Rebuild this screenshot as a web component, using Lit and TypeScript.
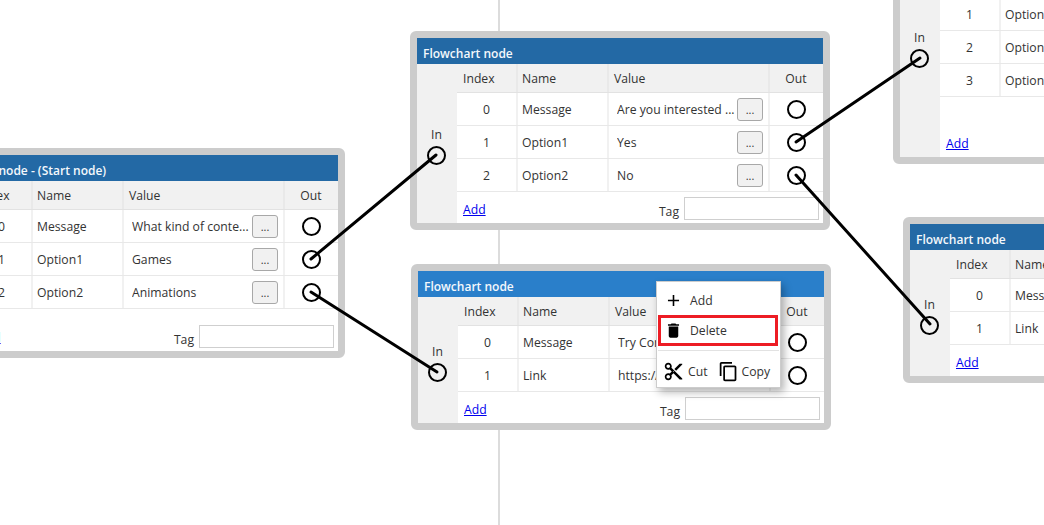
import { LitElement, html, css, svg } from "lit";
import { customElement, property } from "lit/decorators.js";

interface NodeData {
  title: string;
  x: number;
  y: number;
  rows: [string, string][];
  footer: number;
  selected?: boolean;
}

const NODES: NodeData[] = [
  { title: "Flowchart node - (Start node)", x: -75, y: 148, footer: 42, rows: [["Message", "What kind of conte..."], ["Option1", "Games"], ["Option2", "Animations"]] },
  { title: "Flowchart node", x: 410, y: 31, footer: 31, rows: [["Message", "Are you interested ..."], ["Option1", "Yes"], ["Option2", "No"]] },
  { title: "Flowchart node", x: 411, y: 264, footer: 31, selected: true, rows: [["Message", "Try Cor"], ["Link", "https://"]] },
  { title: "Flowchart node", x: 893, y: -97, footer: 60, rows: [["Message", "Which genre?"], ["Option1", "Action"], ["Option2", "Puzzle"], ["Option3", "Strategy"]] },
  { title: "Flowchart node", x: 903, y: 217, footer: 31, rows: [["Message", "Watch this"], ["Link", "https://example"]] },
];

const LINKS: [number, number, number, number][] = [
  [311, 259, 436, 155],
  [311, 292, 437, 372],
  [796, 142, 920, 58],
  [796, 175, 930, 324],
];

const FONT = css`"Open Sans", "Noto Sans", "Liberation Sans", sans-serif`;

@customElement("flow-node")
class FlowNode extends LitElement {
  @property({ attribute: false }) data!: NodeData;

  static styles = css`
    :host { display: block; font-family: ${FONT}; }
    .card {
      width: 420px;
      box-sizing: border-box;
      border: 7px solid #cccccc;
      border-radius: 6px;
      background: #fff;
      color: #333;
      font-size: 12.2px;
      overflow: hidden;
    }
    .head {
      height: 26px;
      line-height: 32px;
      padding-left: 6px;
      background: #2369a5;
      color: #f4f8fc;
      font-size: 12px;
      font-weight: 600;
      white-space: nowrap;
    }
    .selected .head { background: #2a7fca; }
    .body { display: flex; }
    .in {
      width: 40px;
      flex: none;
      background: #f1f1f1;
      display: flex;
      flex-direction: column;
      align-items: center;
      justify-content: center;
      gap: 3px;
      padding: 4px 1px 0 0;
      box-sizing: border-box;
    }
    .in span { line-height: 17px; }
    .dot {
      display: block;
      width: 19px;
      height: 19px;
      box-sizing: border-box;
      border: 2.5px solid #000;
      border-radius: 50%;
      background: #fff;
    }
    .in .dot { background: transparent; }
    .main { flex: 1; min-width: 0; }
    .row {
      display: grid;
      grid-template-columns: 59px 91px 161px 55px;
      height: 33px;
      box-sizing: border-box;
      border-bottom: 1px solid #e8e8e8;
      align-items: stretch;
    }
    .row.hdr { height: 29px; background: #f1f1f1; border-bottom: 1px solid #e2e2e2; }
    .cell {
      display: flex;
      align-items: center;
      min-width: 0;
      border-left: 2px solid #f1f1f1;
      padding-left: 4px;
    }
    .hdr .cell { border-left-color: #e9e9e9; }
    .cell:first-child { border-left: 0; padding-left: 6px; }
    .row:not(.hdr) .cell:first-child { justify-content: center; padding: 0; }
    .cell.val { padding-left: 8px; gap: 2px; padding-right: 5px; }
    .hdr .cell.val { padding-left: 5px; }
    .cell.out { justify-content: center; padding: 0 1px 0 0; }
    .txt { flex: 1; min-width: 0; overflow: hidden; white-space: nowrap; }
    .btn {
      flex: none;
      width: 26px;
      height: 23px;
      box-sizing: border-box;
      border: 1px solid #a8a8a8;
      border-radius: 3px;
      background: #f1f1f1;
      text-align: center;
      line-height: 22px;
      font-size: 11px;
      color: #333;
    }
    .foot {
      display: flex;
      justify-content: space-between;
      align-items: flex-end;
      padding: 0 4px 3px 6px;
      box-sizing: border-box;
    }
    .add { color: #0000ee; text-decoration: underline; line-height: 20px; }
    .tag { display: flex; align-items: flex-end; gap: 5px; }
    .tag span { line-height: 16px; }
    .input {
      width: 135px;
      height: 23px;
      box-sizing: border-box;
      border: 1px solid #cfcfcf;
      background: #fff;
    }
  `;

  render() {
    const d = this.data;
    return html`
      <div class="card ${d.selected ? "selected" : ""}">
        <div class="head">${d.title}</div>
        <div class="body">
          <div class="in"><span>In</span><i class="dot"></i></div>
          <div class="main">
            <div class="row hdr">
              <div class="cell">Index</div>
              <div class="cell">Name</div>
              <div class="cell val">Value</div>
              <div class="cell out">Out</div>
            </div>
            ${d.rows.map(
              ([name, value], i) => html`
                <div class="row">
                  <div class="cell">${i}</div>
                  <div class="cell">${name}</div>
                  <div class="cell val"><span class="txt">${value}</span><span class="btn">...</span></div>
                  <div class="cell out"><i class="dot"></i></div>
                </div>
              `
            )}
            <div class="foot" style="height:${d.footer}px">
              <span class="add">Add</span>
              <span class="tag"><span>Tag</span><span class="input"></span></span>
            </div>
          </div>
        </div>
      </div>
    `;
  }
}

@customElement("app-root")
export class AppRoot extends LitElement {
  static styles = css`
    :host {
      display: block;
      width: 1044px;
      height: 525px;
      position: relative;
      overflow: hidden;
      background: #fff;
      font-family: ${FONT};
    }
    .axis { position: absolute; left: 498px; top: 0; width: 2px; height: 525px; background: #dcdcdc; }
    flow-node { position: absolute; }
    .links { position: absolute; left: 0; top: 0; pointer-events: none; }
    .menu {
      position: absolute;
      left: 656px;
      top: 281px;
      width: 125px;
      box-sizing: border-box;
      padding: 0 1px;
      background: #fff;
      border: 1px solid #cccccc;
      box-shadow: 3px 4px 8px rgba(0, 0, 0, 0.3);
      font-size: 12.2px;
      color: #333;
    }
    .item { display: flex; align-items: center; height: 33px; box-sizing: border-box; padding: 3px 0 0 6px; gap: 7px; }
    .item svg { width: 19px; height: 19px; flex: none; }
    .item.del { width: 120px; height: 31px; border: 3px solid #ed1c24; padding: 0 0 0 3px; }
    .sep { height: 1px; background: #e2e2e2; margin: 4px 0 0; }
    .pair { display: flex; align-items: center; height: 36px; box-sizing: border-box; padding: 4px 0 0 5px; }
    .pair svg { width: 21px; height: 21px; flex: none; }
    .pair .lbl { margin-left: 3px; }
    .pair .cut { margin-left: 4px; }
    .pair .copy { margin-left: 10px; }
  `;

  render() {
    return html`
      <div class="axis"></div>
      ${NODES.map(
        (n) => html`<flow-node .data=${n} style="left:${n.x}px;top:${n.y}px"></flow-node>`
      )}
      <svg class="links" width="1044" height="525">
        ${LINKS.map(
          ([a, b, c, d]) => svg`<line x1=${a} y1=${b} x2=${c} y2=${d} stroke="#000" stroke-width="3" stroke-linecap="round"></line>`
        )}
      </svg>
      <div class="menu">
        <div class="item">
          <svg viewBox="0 0 24 24"><path d="M19 13h-6v6h-2v-6H5v-2h6V5h2v6h6v2z" /></svg>
          <span>Add</span>
        </div>
        <div class="item del">
          <svg viewBox="0 0 24 24"><path d="M6 19c0 1.1.9 2 2 2h8c1.1 0 2-.9 2-2V7H6v12zM19 4h-3.5l-1-1h-5l-1 1H5v2h14V4z" /></svg>
          <span>Delete</span>
        </div>
        <div class="sep"></div>
        <div class="pair">
          <svg viewBox="0 0 24 24"><path d="M9.64 7.64c.23-.5.36-1.05.36-1.64 0-2.21-1.79-4-4-4S2 3.79 2 6s1.79 4 4 4c.59 0 1.14-.13 1.64-.36L10 12l-2.36 2.36C7.14 14.13 6.59 14 6 14c-2.21 0-4 1.79-4 4s1.79 4 4 4 4-1.79 4-4c0-.59-.13-1.14-.36-1.64L12 14l7 7h3v-1L9.64 7.64zM6 8c-1.1 0-2-.89-2-2s.9-2 2-2 2 .89 2 2-.9 2-2 2zm0 12c-1.1 0-2-.89-2-2s.9-2 2-2 2 .89 2 2-.9 2-2 2zm6-7.5c-.28 0-.5-.22-.5-.5s.22-.5.5-.5.5.22.5.5-.22.5-.5.5zM19 3l-6 6 2 2 7-7V3z" /></svg>
          <span class="lbl cut">Cut</span>
          <svg class="copy" viewBox="0 0 24 24"><path d="M16 1H4c-1.1 0-2 .9-2 2v14h2V3h12V1zm3 4H8c-1.1 0-2 .9-2 2v14c0 1.1.9 2 2 2h11c1.1 0 2-.9 2-2V7c0-1.1-.9-2-2-2zm0 16H8V7h11v14z" /></svg>
          <span class="lbl">Copy</span>
        </div>
      </div>
    `;
  }
}
